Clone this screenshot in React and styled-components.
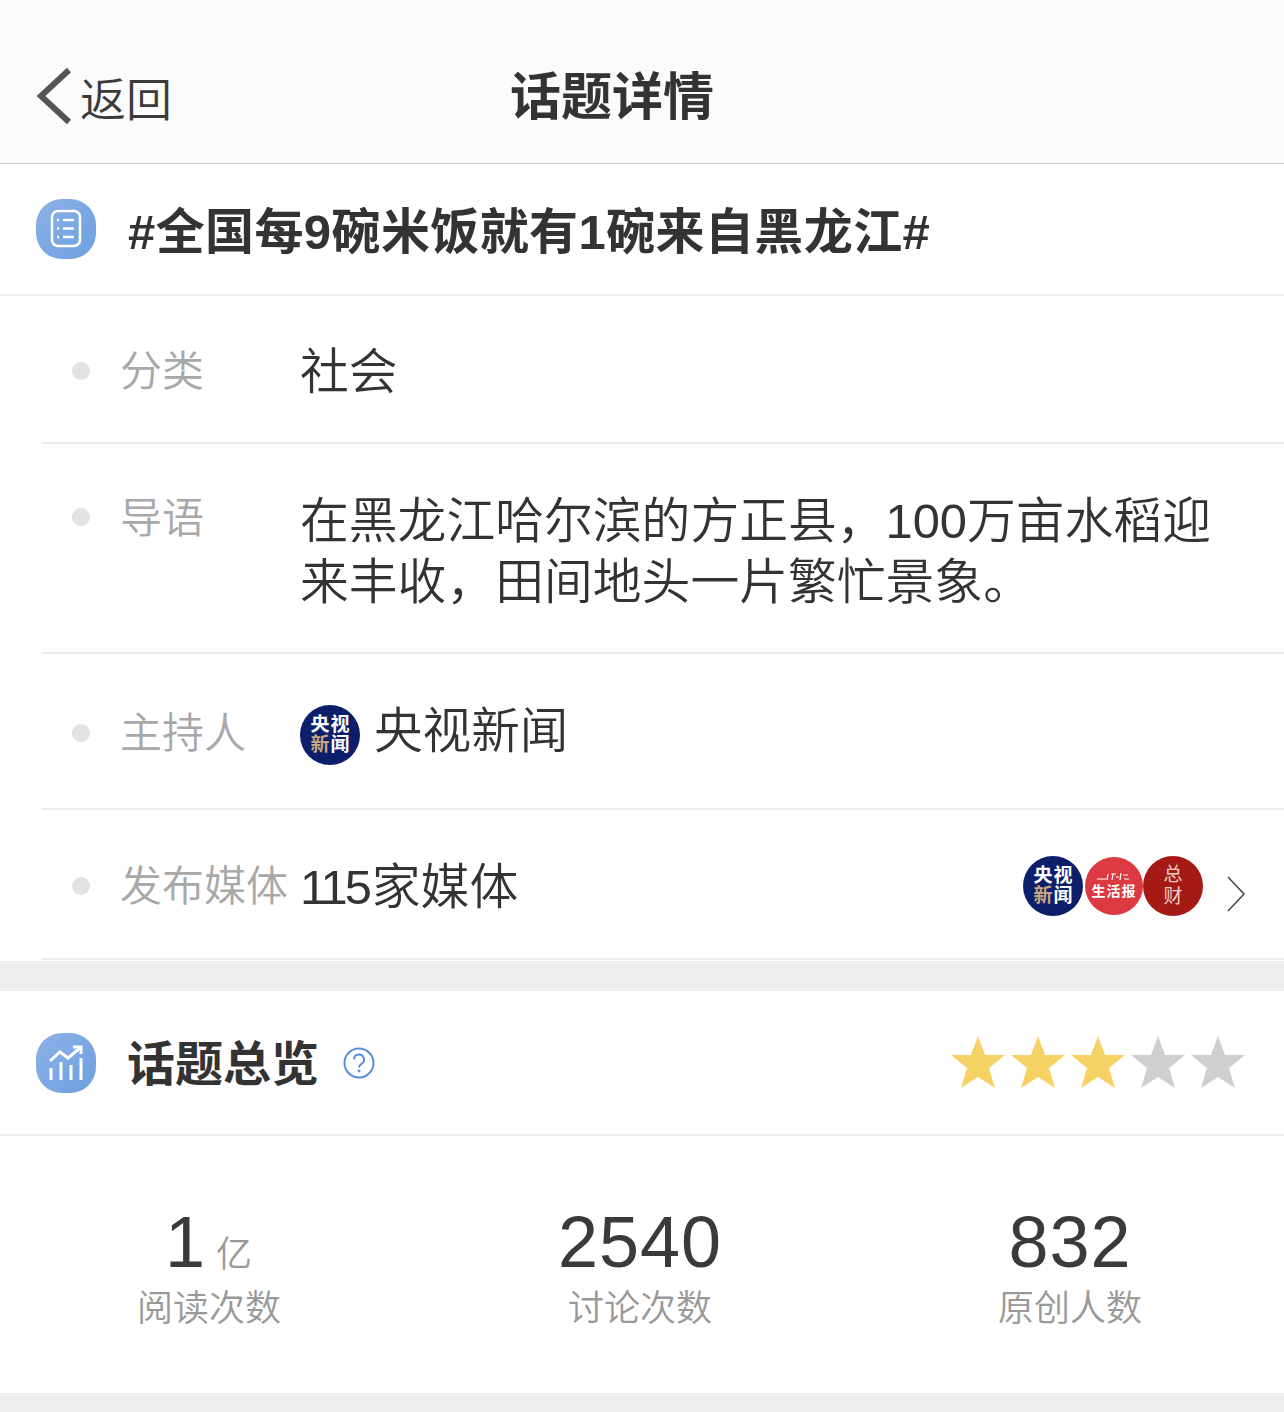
import React from "react";
import styled, { createGlobalStyle } from "styled-components";

const CJK = `"Liberation Sans", "Noto Sans CJK SC", sans-serif`;

const infoRows = [
  { label: "分类", value: "社会", height: 148 },
  {
    label: "导语",
    value: "在黑龙江哈尔滨的方正县，100万亩水稻迎来丰收，田间地头一片繁忙景象。",
    height: 210,
    top: true,
  },
  { label: "主持人", host: true, value: "央视新闻", height: 156 },
  { label: "发布媒体", count: "115", value: "家媒体", media: true, height: 150 },
];

const stats = [
  { num: "1", unit: "亿", label: "阅读次数" },
  { num: "2540", label: "讨论次数" },
  { num: "832", label: "原创人数" },
];

const CctvLogo = () => (
  <Avatar $bg="#0d1f6b">
    <LogoGrid>
      <LogoChar>央</LogoChar>
      <LogoChar>视</LogoChar>
      <LogoChar $tan>新</LogoChar>
      <LogoChar>闻</LogoChar>
    </LogoGrid>
  </Avatar>
);

const App = () => {
  return (
    <Page>
      <GlobalStyle />
      <Header>
        <BackLink>
          <svg width="36" height="60" viewBox="0 0 36 60">
            <path d="M33 3 L5 29 L33 55" fill="none" stroke="#555" strokeWidth="6" />
          </svg>
          <BackText>返回</BackText>
        </BackLink>
        <HeaderTitle>话题详情</HeaderTitle>
      </Header>

      <TopicRow>
        <IconBadge>
          <svg width="36" height="42" viewBox="0 0 36 42" fill="none" stroke="#fff">
            <rect x="4" y="3" width="28" height="35" rx="6" strokeWidth="2.5" />
            <path d="M15 12H26M15 20.5H26M15 29H26" strokeWidth="2.5" />
            <path d="M9 12H11M9 20.5H11M9 29H11" strokeWidth="2.5" />
          </svg>
        </IconBadge>
        <TopicTitle>#全国每9碗米饭就有1碗来自黑龙江#</TopicTitle>
      </TopicRow>

      <InfoList>
        {infoRows.map((row) => (
          <InfoRow key={row.label} $height={row.height} $top={row.top}>
            <Dot $top={row.top} />
            <Label $top={row.top}>{row.label}</Label>
            {row.host ? (
              <HostValue>
                <CctvLogo />
                <HostName>{row.value}</HostName>
              </HostValue>
            ) : (
              <Value $top={row.top}>
                {row.count && <Count>{row.count}</Count>}
                {row.value}
              </Value>
            )}
            {row.media && (
              <MediaGroup>
                <CctvLogo />
                <RedAvatar>
                  <svg width="36" height="10" viewBox="0 0 36 10">
                    <path
                      d="M1 7 H10 M12 2 L11 8 M15 2 H20 M17 2 L16 8 M20 5 H23 M25 1 L24 8 M27 3 H32 M28 7 H33"
                      fill="none"
                      stroke="#fff"
                      strokeWidth="1.2"
                    />
                  </svg>
                  <SmallScript>生活报</SmallScript>
                </RedAvatar>
                <Avatar $bg="#a51a14">
                  <LogoColumn>总</LogoColumn>
                  <LogoColumn>财</LogoColumn>
                </Avatar>
                <MoreArrow width="20" height="36" viewBox="0 0 20 36">
                  <path d="M2 1 L18 18 L2 35" fill="none" stroke="#444" strokeWidth="1.5" />
                </MoreArrow>
              </MediaGroup>
            )}
          </InfoRow>
        ))}
      </InfoList>

      <GrayBand />

      <OverviewHead>
        <IconBadge>
          <svg width="38" height="36" viewBox="0 0 38 36" fill="none" stroke="#fff" strokeWidth="3">
            <path d="M3 16 L13 7 L21 13 L33 3" />
            <path d="M26 2 H34 V9" />
            <path d="M4 23V35M14 17V35M24 20V35M34 13V35" />
          </svg>
        </IconBadge>
        <OverviewTitle>话题总览</OverviewTitle>
        <svg width="32" height="32" viewBox="0 0 32 32">
          <circle cx="16" cy="16" r="14.5" fill="none" stroke="#5b8fdc" strokeWidth="2" />
          <path d="M11 12.5a5 5 0 1 1 7.5 4.3c-1.6.9-2.5 1.7-2.5 3.7" fill="none" stroke="#5b8fdc" strokeWidth="2" />
          <circle cx="16" cy="24" r="1.4" fill="#5b8fdc" />
        </svg>
        <Stars>
          {[0, 1, 2, 3, 4].map((i) => (
            <svg key={i} width="60" height="54" viewBox="0 0 60 54">
              <path
                d="M30 0 L37 19 L57 19 L41 32 L47 52 L30 41 L13 52 L19 32 L3 19 L23 19 Z"
                fill={i < 3 ? "#f6d264" : "#cfcfcf"}
              />
            </svg>
          ))}
        </Stars>
      </OverviewHead>

      <StatsGrid>
        {stats.map((s) => (
          <StatCell key={s.label}>
            <StatNumber>
              {s.num}
              {s.unit && <StatUnit>{s.unit}</StatUnit>}
            </StatNumber>
            <StatLabel>{s.label}</StatLabel>
          </StatCell>
        ))}
      </StatsGrid>

      <BottomBand />
    </Page>
  );
};

export default App;

const GlobalStyle = createGlobalStyle`
  html, body {
    margin: 0;
    padding: 0;
    background: #fff;
  }
  * {
    box-sizing: border-box;
  }
`;

const Page = styled.div`
  width: 1284px;
  height: 1412px;
  overflow: hidden;
  font-family: ${CJK};
  color: #333;
`;

const Header = styled.header`
  height: 164px;
  background: #fbfbfb;
  border-bottom: 1px solid #c8c8c8;
  display: grid;
  grid-template-columns: 1fr auto 1fr;
  align-items: center;
  padding: 30px 36px 0 36px;
`;

const BackLink = styled.div`
  display: flex;
  align-items: center;
  gap: 8px;
  color: #3a3a3a;
`;

const BackText = styled.span`
  font-size: 46px;
  line-height: 60px;
  font-weight: 350;
  color: #3a3a3a;
  margin-top: 6px;
`;

const HeaderTitle = styled.h1`
  margin: 2px 60px 0 0;
  font-size: 51px;
  line-height: 60px;
  font-weight: 700;
  color: #333;
`;

const TopicRow = styled.div`
  height: 132px;
  display: flex;
  align-items: center;
  gap: 32px;
  padding-left: 36px;
  border-bottom: 2px solid #eeeeee;
`;

const IconBadge = styled.div`
  width: 60px;
  height: 60px;
  border-radius: 26px;
  background: linear-gradient(135deg, #8db2e6, #6c9fe0);
  display: flex;
  align-items: center;
  justify-content: center;
  flex-shrink: 0;
`;

const TopicTitle = styled.h2`
  margin: 6px 0 0;
  font-size: 49px;
  line-height: 60px;
  letter-spacing: 0.4px;
  font-weight: 700;
  color: #333;
`;

const InfoList = styled.div`
  padding-left: 42px;
`;

const InfoRow = styled.div`
  height: ${(p) => p.$height}px;
  display: flex;
  align-items: ${(p) => (p.$top ? "flex-start" : "center")};
  padding-top: ${(p) => (p.$top ? "47px" : "0")};
  border-bottom: 2px solid #ececec;
`;

const Dot = styled.span`
  width: 18px;
  height: 18px;
  border-radius: 50%;
  background: #e2e2e2;
  margin-left: 30px;
  margin-right: 30px;
  flex-shrink: 0;
  margin-top: ${(p) => (p.$top ? "17px" : "3px")};
`;

const Label = styled.div`
  width: 180px;
  flex-shrink: 0;
  font-size: 42px;
  line-height: 56px;
  font-weight: 350;
  color: #a8a8a8;
  margin-top: ${(p) => (p.$top ? "0" : "6px")};
`;

const Value = styled.div`
  flex: 1;
  font-size: 48.8px;
  line-height: 61px;
  font-weight: 350;
  color: #333;
  padding-right: 60px;
  margin-top: ${(p) => (p.$top ? "0" : "7px")};
`;

const Count = styled.span`
  letter-spacing: -3px;
  margin-right: 3px;
`;

const HostValue = styled.div`
  flex: 1;
  display: flex;
  align-items: center;
  gap: 14px;
  margin-top: 8px;
`;

const HostName = styled.span`
  font-size: 48.6px;
  line-height: 61px;
  font-weight: 350;
  color: #333;
  margin-bottom: 8px;
`;

const Avatar = styled.div`
  width: 60px;
  height: 60px;
  border-radius: 50%;
  background: ${(p) => p.$bg};
  color: #fff;
  display: flex;
  flex-direction: column;
  align-items: center;
  justify-content: center;
  flex-shrink: 0;
  overflow: hidden;
`;

const RedAvatar = styled(Avatar)`
  width: 58px;
  height: 58px;
  background: #dc3a42;
  margin-left: 2px;
`;

const LogoGrid = styled.div`
  display: grid;
  grid-template-columns: 20px 20px;
  grid-auto-rows: 20px;
`;

const LogoChar = styled.span`
  font-size: 19px;
  line-height: 20px;
  height: 20px;
  font-weight: 700;
  text-align: center;
  color: ${(p) => (p.$tan ? "#c9a77f" : "#fff")};
`;

const LogoColumn = styled.span`
  font-size: 19px;
  line-height: 22px;
  height: 22px;
  color: #f0cfc8;
`;

const SmallScript = styled.span`
  font-size: 14px;
  line-height: 18px;
  font-weight: 700;
  letter-spacing: 1px;
  white-space: nowrap;
`;

const MediaGroup = styled.div`
  display: flex;
  align-items: center;
  margin: 4px 38px 0 0;
`;

const MoreArrow = styled.svg`
  margin: 16px 0 0 23px;
`;

const GrayBand = styled.div`
  height: 30px;
  margin-top: 1px;
  background: #ededed;
`;

const OverviewHead = styled.div`
  height: 145px;
  display: flex;
  align-items: center;
  padding-left: 36px;
  border-bottom: 2px solid #ececec;
  & > svg {
    margin-left: 24px;
  }
`;

const OverviewTitle = styled.h2`
  margin: 4px 0 0 31px;
  font-size: 48px;
  line-height: 60px;
  font-weight: 700;
  color: #333;
`;

const Stars = styled.div`
  margin-left: auto;
  margin-right: 36px;
  display: flex;
`;

const StatsGrid = styled.div`
  height: 257px;
  display: grid;
  grid-template-columns: 418px 444px 416px;
  padding-top: 70px;
`;

const StatCell = styled.div`
  display: flex;
  flex-direction: column;
  align-items: center;
`;

const StatNumber = styled.div`
  font-family: "Liberation Sans", sans-serif;
  font-size: 72px;
  line-height: 72px;
  height: 72px;
  letter-spacing: 1px;
  color: #3a3a3a;
`;

const StatUnit = styled.span`
  font-family: ${CJK};
  font-size: 36px;
  line-height: 36px;
  font-weight: 350;
  color: #999;
  margin-left: 10px;
`;

const StatLabel = styled.div`
  margin-top: 7px;
  font-size: 36px;
  line-height: 48px;
  font-weight: 350;
  color: #999;
`;

const BottomBand = styled.div`
  height: 19px;
  background: #ededed;
`;
